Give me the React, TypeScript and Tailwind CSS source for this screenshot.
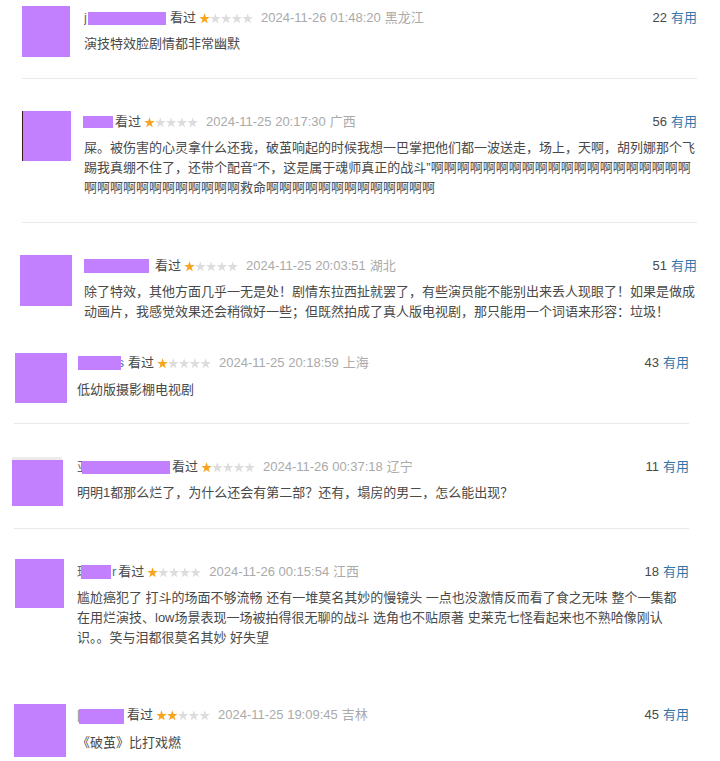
import React from "react";

const STAR =
  "5.5,0.2 6.79,3.92 10.73,4 7.59,6.38 8.73,10.15 5.5,7.9 2.27,10.15 3.41,6.38 0.27,4 4.21,3.92";

function Stars({ n }: { n: number }) {
  return (
    <svg width="54" height="11" viewBox="0 0 54 11" className="shrink-0">
      {[0, 1, 2, 3, 4].map((i) => (
        <polygon
          key={i}
          points={STAR}
          transform={`translate(${i * 10.8} 0)`}
          fill={i < n ? "#f7a420" : "#dddddd"}
        />
      ))}
    </svg>
  );
}

function Header({
  name,
  date,
  loc,
  count,
  stars = 1,
}: {
  name: React.ReactNode;
  date: string;
  loc: string;
  count: string;
  stars?: number;
}) {
  return (
    <div className="flex h-[20px] items-center whitespace-nowrap leading-[20px]">
      {name}
      <span className="text-[#494949]">看过</span>
      <span className="ml-[3px] flex items-center">
        <Stars n={stars} />
      </span>
      <span className="ml-[8px] text-[#aaaaaa]">{date}</span>
      <span className="ml-[4px] text-[#aaaaaa]">{loc}</span>
      <span className="flex-1" />
      <span className="text-[#494949]">{count}</span>
      <span className="ml-[4px] text-[#3377aa]">有用</span>
    </div>
  );
}

const Rect = ({ cls }: { cls: string }) => <span className={`shrink-0 bg-[#c280ff] ${cls}`} />;

export default function App() {
  return (
    <div className="flex h-[761px] w-[720px] flex-col overflow-hidden bg-white font-['Liberation_Sans','Noto_Sans_CJK_SC',sans-serif] text-[13px] text-[#494949]">
      {/* Block 1 */}
      <div className="flex h-[78px] shrink-0 items-start pl-[22px] pt-[6px]">
        <div className="h-[51px] w-[48px] shrink-0 bg-[#c280ff]" />
        <div className="ml-[14px] mt-[2px] w-[613px]">
          <Header
            name={
              <>
                <span className="w-[4px] overflow-hidden text-[#666]">j</span>
                <Rect cls="h-[13px] w-[78px]" />
                <span className="w-[4px]" />
              </>
            }
            date="2024-11-26 01:48:20"
            loc="黑龙江"
            count="22"
          />
          <div className="mt-[6px] leading-[20px]">演技特效脸剧情都非常幽默</div>
        </div>
      </div>
      <div className="ml-[22px] h-px w-[675px] shrink-0 bg-[#e9e9e9]" />

      {/* Block 2 */}
      <div className="flex h-[143px] shrink-0 items-start pl-[22px] pt-[32px]">
        <div className="h-[50px] w-[49px] shrink-0 border-l border-[#3a1a12] bg-[#c280ff]" />
        <div className="ml-[13px] mt-[1px] w-[613px]">
          <Header
            name={
              <>
                <Rect cls="-ml-[1px] h-[12px] w-[30px]" />
                <span className="w-[2px]" />
              </>
            }
            date="2024-11-25 20:17:30"
            loc="广西"
            count="56"
          />
          <div className="mt-[6px] whitespace-nowrap leading-[20px]">
            <div>屎。被伤害的心灵拿什么还我，破茧响起的时候我想一巴掌把他们都一波送走，场上，天啊，胡列娜那个飞</div>
            <div>踢我真绷不住了，还带个配音“不，这是属于魂师真正的战斗”啊啊啊啊啊啊啊啊啊啊啊啊啊啊啊啊啊啊啊啊</div>
            <div>啊啊啊啊啊啊啊啊啊啊啊啊救命啊啊啊啊啊啊啊啊啊啊啊啊啊</div>
          </div>
        </div>
      </div>
      <div className="ml-[22px] h-px w-[675px] shrink-0 bg-[#e9e9e9]" />

      {/* Block 3 */}
      <div className="flex h-[117px] shrink-0 items-start pl-[20px] pt-[32px]">
        <div className="h-[51px] w-[52px] shrink-0 bg-[#c280ff]" />
        <div className="ml-[12px] mt-[1px] w-[613px]">
          <Header
            name={
              <>
                <Rect cls="h-[14px] w-[65px]" />
                <span className="w-[6px]" />
              </>
            }
            date="2024-11-25 20:03:51"
            loc="湖北"
            count="51"
          />
          <div className="mt-[6px] whitespace-nowrap leading-[20px]">
            <div>除了特效，其他方面几乎一无是处！剧情东拉西扯就罢了，有些演员能不能别出来丢人现眼了！如果是做成</div>
            <div>动画片，我感觉效果还会稍微好一些；但既然拍成了真人版电视剧，那只能用一个词语来形容：垃圾！</div>
          </div>
        </div>
      </div>

      {/* Block 4 */}
      <div className="flex h-[83px] shrink-0 items-start pl-[15px] pt-[13px]">
        <div className="h-[50px] w-[52px] shrink-0 bg-[#c280ff]" />
        <div className="ml-[10px] w-[612px]">
          <Header
            name={
              <>
                <Rect cls="ml-[1px] h-[14px] w-[43px]" />
                <span className="flex w-[3px] justify-end overflow-hidden text-[#3377aa]">s</span>
                <span className="w-[4px]" />
              </>
            }
            date="2024-11-25 20:18:59"
            loc="上海"
            count="43"
          />
          <div className="mt-[7px] leading-[20px]">低幼版摄影棚电视剧</div>
        </div>
      </div>
      <div className="ml-[14px] h-px w-[675px] shrink-0 bg-[#e9e9e9]" />

      {/* Block 5 */}
      <div className="flex h-[104px] shrink-0 items-start pl-[12px] pt-[33px]">
        <div className="flex shrink-0 flex-col">
          <div className="h-[3px] w-[50px] bg-[#ececec]" />
          <div className="h-[46px] w-[51px] bg-[#c280ff]" />
        </div>
        <div className="ml-[14px] w-[612px]">
          <Header
            name={
              <>
                <span className="w-[5px] overflow-hidden text-[#666]">亚</span>
                <Rect cls="h-[13px] w-[88px]" />
                <span className="w-[2px]" />
              </>
            }
            date="2024-11-26 00:37:18"
            loc="辽宁"
            count="11"
          />
          <div className="mt-[6px] leading-[20px]">明明1都那么烂了，为什么还会有第二部？还有，塌房的男二，怎么能出现？</div>
        </div>
      </div>
      <div className="ml-[14px] h-px w-[675px] shrink-0 bg-[#e9e9e9]" />

      {/* Block 6 */}
      <div className="flex h-[161px] shrink-0 items-start pl-[15px] pt-[30px]">
        <div className="h-[49px] w-[49px] shrink-0 bg-[#c280ff]" />
        <div className="ml-[13px] mt-[3px] w-[612px]">
          <Header
            name={
              <>
                <span className="w-[4px] overflow-hidden text-[#666]">璟</span>
                <Rect cls="h-[14px] w-[30px]" />
                <span className="ml-[1px] text-[#3377aa]">r</span>
                <span className="w-[2px]" />
              </>
            }
            date="2024-11-26 00:15:54"
            loc="江西"
            count="18"
          />
          <div className="mt-[6px] whitespace-nowrap leading-[20px]">
            <div>尴尬癌犯了 打斗的场面不够流畅 还有一堆莫名其妙的慢镜头 一点也没激情反而看了食之无味 整个一集都</div>
            <div>在用烂演技、low场景表现一场被拍得很无聊的战斗 选角也不贴原著 史莱克七怪看起来也不熟哈像刚认</div>
            <div>识。。笑与泪都很莫名其妙 好失望</div>
          </div>
        </div>
      </div>

      {/* Block 7 */}
      <div className="flex h-[71px] shrink-0 items-start pl-[14px] pt-[14px]">
        <div className="h-[53px] w-[52px] shrink-0 bg-[#c280ff]" />
        <div className="ml-[11px] mt-[1px] w-[612px]">
          <Header
            name={
              <>
                <span className="w-[2px] overflow-hidden text-[#999]">[</span>
                <Rect cls="mt-[3px] h-[15px] w-[45px]" />
                <span className="w-[3px]" />
              </>
            }
            date="2024-11-25 19:09:45"
            loc="吉林"
            count="45"
            stars={2}
          />
          <div className="mt-[8px] leading-[20px]">《破茧》比打戏燃</div>
        </div>
      </div>
    </div>
  );
}
